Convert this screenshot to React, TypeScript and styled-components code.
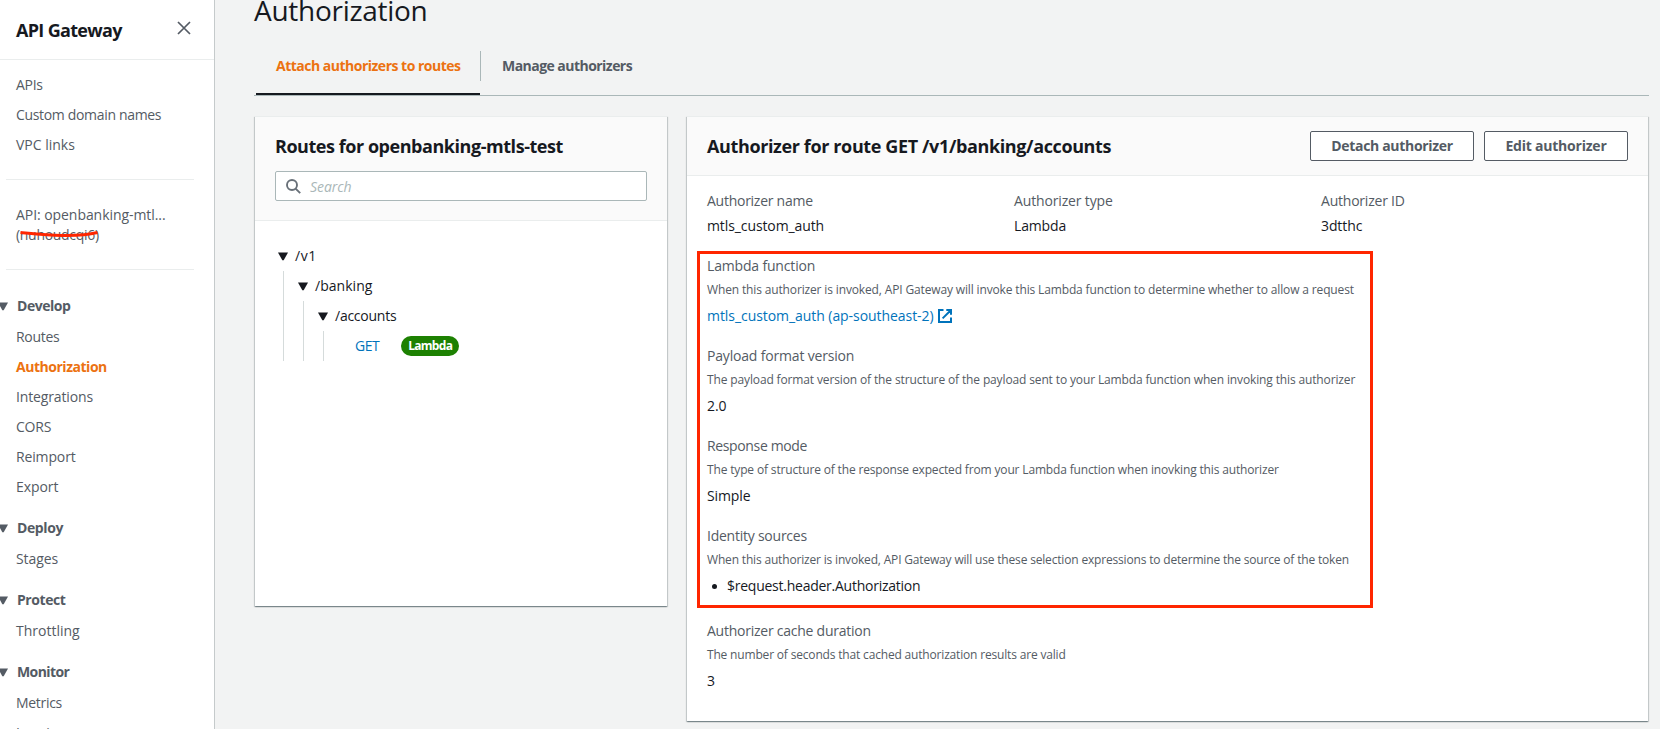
import React from 'react';
import styled, { createGlobalStyle } from 'styled-components';

const color = {
  ink: '#16191f',
  muted: '#545b64',
  label: '#545b64',
  orange: '#ec7211',
  link: '#0073bb',
  line: '#eaeded',
  control: '#aab7b8',
  mark: '#ff2600',
};

const GlobalStyle = createGlobalStyle`
  * { box-sizing: border-box; }
  html, body { margin: 0; height: 729px; overflow: hidden; }
  body {
    background: #f2f3f3;
    color: ${color.ink};
    font: 400 14px/20px 'Open Sans', 'Noto Sans', sans-serif;
  }
  h1, h2, h3, p, ul { margin: 0; padding: 0; }
`;

const Page = styled.div`
  display: flex;
  height: 729px;
  overflow: hidden;
`;

/* Letter tracking is tuned per string, in pixels */
const Text = styled.span<{ $t?: number }>`
  letter-spacing: ${p => p.$t ?? 0}px;
  white-space: nowrap;
`;

const Sidebar = styled.aside`
  flex: none;
  width: 215px;
  height: 729px;
  overflow: hidden;
  background: #fff;
  border-right: 1px solid #c5cacb;
`;

const SidebarHeader = styled.div`
  display: flex;
  justify-content: space-between;
  align-items: flex-start;
  height: 60px;
  padding: 19px 23px 0 16px;
  border-bottom: 1px solid ${color.line};
  h2 { font-size: 18px; line-height: 22px; font-weight: 700; }
  svg { margin-top: 2px; }
`;

const NavList = styled.ul<{ $top?: number }>`
  list-style: none;
  padding: ${p => p.$top ?? 0}px 0 0 16px;
`;

const NavItem = styled.li<{ $active?: boolean }>`
  height: 30px;
  line-height: 30px;
  color: ${p => (p.$active ? color.orange : color.muted)};
  font-weight: ${p => (p.$active ? 700 : 400)};
`;

const Divider = styled.hr<{ $top?: number }>`
  width: 188px;
  margin: ${p => p.$top ?? 0}px 0 0 6px;
  border: 0;
  border-top: 1px solid ${color.line};
`;

const ApiName = styled.div`
  padding: 25px 0 24px 16px;
  color: ${color.muted};
  p { height: 20px; }
`;

const ApiId = styled.p`
  position: relative;
  svg { position: absolute; left: 3px; top: 5px; }
`;

const NavGroup = styled.section`
  margin-bottom: 10px;
`;

const GroupHead = styled.h3`
  display: flex;
  align-items: center;
  height: 32px;
  font-size: 14px;
  font-weight: 700;
  color: ${color.muted};
  svg { margin: 0 9px 0 -2px; }
`;

const Groups = styled.div`
  padding-top: 20px;
`;

const Main = styled.main`
  flex: 1;
  min-width: 0;
  padding: 0 11px 0 39px;
`;

const Title = styled.h1`
  height: 48px;
  margin-top: -8px;
  font-size: 28px;
  line-height: 36px;
  font-weight: 400;
`;

const Tabs = styled.div`
  display: flex;
  height: 56px;
  padding-left: 2px;
  border-bottom: 1px solid ${color.control};
`;

const Tab = styled.div<{ $active?: boolean }>`
  width: ${p => (p.$active ? 224 : 170)}px;
  height: 55px;
  padding: 16px 0 0 20px;
  font-weight: 700;
  color: ${p => (p.$active ? color.orange : color.muted)};
  border-bottom: 2px solid ${p => (p.$active ? color.ink : 'transparent')};
`;

const TabSeparator = styled.i`
  width: 1px;
  height: 30px;
  margin: 11px 1px 0 0;
  background: ${color.control};
`;

const Columns = styled.div`
  display: grid;
  grid-template-columns: 412px 961px;
  column-gap: 20px;
  align-items: start;
  padding: 20px 0 0 1px;
`;

const Panel = styled.section<{ $height: number }>`
  height: ${p => p.$height}px;
  background: #fff;
  border-top: 1px solid ${color.line};
  box-shadow: 0 1px 1px 0 rgba(0, 28, 36, 0.3), 1px 1px 1px 0 rgba(0, 28, 36, 0.15),
    -1px 1px 1px 0 rgba(0, 28, 36, 0.15);
`;

const PanelTitle = styled.h2`
  font-size: 18px;
  line-height: 22px;
  font-weight: 700;
`;

const RoutesHeader = styled.header`
  height: 104px;
  padding: 18px 20px 0 20px;
  background: #fafafa;
  border-bottom: 1px solid ${color.line};
`;

const SearchBox = styled.div`
  display: flex;
  align-items: center;
  height: 30px;
  margin-top: 14px;
  padding-left: 10px;
  background: #fff;
  border: 1px solid ${color.control};
  border-radius: 2px;
  font-style: italic;
  color: ${color.control};
  svg { margin-right: 9px; }
  span { padding-top: 1px; }
`;

const Tree = styled.div`
  padding: 20px 0 0 23px;
`;

const TreeNode = styled.div`
  display: flex;
  align-items: center;
  height: 30px;
  svg { margin-right: 7px; }
`;

const Branch = styled.div`
  margin-left: 5px;
  padding-left: 14px;
  border-left: 1px solid #d5dbdb;
`;

const RouteMethod = styled.div`
  display: flex;
  align-items: center;
  height: 30px;
  padding-left: 17px;
  color: ${color.link};
`;

const Badge = styled.span`
  width: 58px;
  height: 20px;
  margin-left: 22px;
  border-radius: 10px;
  background: #1d8102;
  color: #fff;
  font-size: 12px;
  line-height: 20px;
  font-weight: 700;
  text-align: center;
`;

const DetailHeader = styled.header`
  display: flex;
  align-items: center;
  gap: 10px;
  height: 59px;
  padding: 0 20px;
  background: #fafafa;
  border-bottom: 1px solid ${color.line};
  h2 { flex: 1; padding-bottom: 1px; }
`;

const Button = styled.button<{ $width: number }>`
  width: ${p => p.$width}px;
  height: 30px;
  padding: 0;
  background: #fff;
  border: 1px solid ${color.muted};
  border-radius: 2px;
  color: ${color.muted};
  font: 700 14px/20px 'Open Sans', 'Noto Sans', sans-serif;
`;

const DetailBody = styled.div`
  padding: 15px 20px 0;
`;

const Summary = styled.div`
  display: grid;
  grid-template-columns: repeat(3, 307px);
  margin-bottom: 20px;
`;

const Label = styled.div`
  height: 20px;
  color: ${color.label};
`;

const Hint = styled.div`
  height: 17px;
  margin-top: 5px;
  font-size: 12px;
  line-height: 17px;
  color: ${color.label};
`;

const Value = styled.div<{ $gap?: number }>`
  display: flex;
  align-items: center;
  height: 20px;
  margin-top: ${p => p.$gap ?? 8}px;
`;

const Field = styled.div`
  height: 70px;
  margin-bottom: 20px;
`;

const LinkValue = styled(Value)`
  color: ${color.link};
  svg { margin-left: 4px; }
`;

const Bullet = styled.i`
  width: 5px;
  height: 5px;
  margin: 1px 10px 0 5px;
  border-radius: 50%;
  background: ${color.ink};
`;

const Highlighted = styled.div`
  position: relative;
  margin-bottom: 25px;
`;

const HighlightFrame = styled.div`
  position: absolute;
  left: -10px;
  top: -5px;
  width: 676px;
  height: 357px;
  border: 3px solid ${color.mark};
`;

const Caret = ({ fill }: { fill: string }) => (
  <svg width="10" height="9" viewBox="0 0 10 9">
    <path d="M0 0.5h10L5.8 8.1q-.8.8-1.6 0z" fill={fill} />
  </svg>
);

const CloseIcon = () => (
  <svg width="14" height="14" viewBox="0 0 14 14">
    <path d="M1 1l12 12M13 1L1 13" stroke={color.muted} strokeWidth="1.7" fill="none" />
  </svg>
);

const SearchIcon = () => (
  <svg width="15" height="15" viewBox="0 0 15 15">
    <circle cx="6" cy="6" r="5" stroke="#687078" strokeWidth="1.9" fill="none" />
    <path d="M9.6 9.6l4.6 4.6" stroke="#687078" strokeWidth="1.9" />
  </svg>
);

const ExternalIcon = () => (
  <svg width="14" height="14" viewBox="0 0 14 14" fill="none" stroke={color.link} strokeWidth="2">
    <path d="M5.5 1H1v12h12V8.5M8.3 1H13v4.8M12.8 1.2L4.6 9.4" />
  </svg>
);

type Item = { name: string; t: number; active?: boolean };
const groups: { title: string; t: number; items: Item[] }[] = [
  {
    title: 'Develop', t: -0.47,
    items: [
      { name: 'Routes', t: -0.3 },
      { name: 'Authorization', t: -0.47, active: true },
      { name: 'Integrations', t: -0.135 },
      { name: 'CORS', t: -0.22 },
      { name: 'Reimport', t: -0.14 },
      { name: 'Export', t: -0.06 },
    ],
  },
  { title: 'Deploy', t: -0.39, items: [{ name: 'Stages', t: -0.08 }] },
  { title: 'Protect', t: -0.44, items: [{ name: 'Throttling', t: 0 }] },
  { title: 'Monitor', t: -0.6, items: [{ name: 'Metrics', t: -0.3 }, { name: 'Logging', t: -0.2 }] },
];

const fields: { label: string; lt: number; hint: string; ht: number; value: React.ReactNode }[] = [
  {
    label: 'Lambda function', lt: -0.17,
    hint: 'When this authorizer is invoked, API Gateway will invoke this Lambda function to determine whether to allow a request', ht: -0.143,
    value: <LinkValue><Text $t={-0.06}>mtls_custom_auth (ap-southeast-2)</Text><ExternalIcon /></LinkValue>,
  },
  {
    label: 'Payload format version', lt: -0.18,
    hint: 'The payload format version of the structure of the payload sent to your Lambda function when invoking this authorizer', ht: -0.135,
    value: <Value><Text $t={-0.1}>2.0</Text></Value>,
  },
  {
    label: 'Response mode', lt: -0.36,
    hint: 'The type of structure of the response expected from your Lambda function when inovking this authorizer', ht: -0.155,
    value: <Value><Text $t={-0.1}>Simple</Text></Value>,
  },
  {
    label: 'Identity sources', lt: -0.24,
    hint: 'When this authorizer is invoked, API Gateway will use these selection expressions to determine the source of the token', ht: -0.174,
    value: <Value><Bullet /><Text $t={-0.25}>$request.header.Authorization</Text></Value>,
  },
];

export default function App() {
  return (
    <Page>
      <GlobalStyle />
      <Sidebar>
        <SidebarHeader>
          <h2><Text $t={-0.68}>API Gateway</Text></h2>
          <CloseIcon />
        </SidebarHeader>
        <NavList $top={10}>
          <NavItem><Text $t={-0.3}>APIs</Text></NavItem>
          <NavItem><Text $t={-0.33}>Custom domain names</Text></NavItem>
          <NavItem><Text $t={-0.01}>VPC links</Text></NavItem>
        </NavList>
        <Divider $top={19} />
        <ApiName>
          <p><Text $t={-0.06}>API: openbanking-mtl...</Text></p>
          <ApiId>
            <Text $t={-0.3}>(nuhoudcqi6)</Text>
            <svg width="80" height="10" viewBox="0 0 80 10">
              <path d="M1.500 2.500C24 4.500 56 8 78.500 2.500" stroke={color.mark} strokeWidth="3" fill="none" />
            </svg>
          </ApiId>
        </ApiName>
        <Divider />
        <Groups>
          {groups.map(g => (
            <NavGroup key={g.title}>
              <GroupHead><Caret fill={color.muted} /><Text $t={g.t}>{g.title}</Text></GroupHead>
              <NavList>
                {g.items.map(i => (
                  <NavItem key={i.name} $active={i.active}><Text $t={i.t}>{i.name}</Text></NavItem>
                ))}
              </NavList>
            </NavGroup>
          ))}
        </Groups>
      </Sidebar>
      <Main>
        <Title><Text $t={-0.28}>Authorization</Text></Title>
        <Tabs>
          <Tab $active><Text $t={-0.5}>Attach authorizers to routes</Text></Tab>
          <TabSeparator />
          <Tab><Text $t={-0.537}>Manage authorizers</Text></Tab>
        </Tabs>
        <Columns>
          <Panel $height={490}>
            <RoutesHeader>
              <PanelTitle><Text $t={-0.453}>Routes for openbanking-mtls-test</Text></PanelTitle>
              <SearchBox><SearchIcon /><Text $t={-0.05}>Search</Text></SearchBox>
            </RoutesHeader>
            <Tree>
              <TreeNode><Caret fill={color.ink} /><Text $t={0.6}>/v1</Text></TreeNode>
              <Branch>
                <TreeNode><Caret fill={color.ink} /><Text $t={0.04}>/banking</Text></TreeNode>
                <Branch>
                  <TreeNode><Caret fill={color.ink} /><Text $t={-0.25}>/accounts</Text></TreeNode>
                  <Branch>
                    <RouteMethod><Text $t={-0.5}>GET</Text><Badge><Text $t={-0.7}>Lambda</Text></Badge></RouteMethod>
                  </Branch>
                </Branch>
              </Branch>
            </Tree>
          </Panel>
          <Panel $height={605}>
            <DetailHeader>
              <PanelTitle><Text $t={-0.375}>Authorizer for route GET /v1/banking/accounts</Text></PanelTitle>
              <Button $width={164}><Text $t={-0.315}>Detach authorizer</Text></Button>
              <Button $width={144}><Text $t={-0.216}>Edit authorizer</Text></Button>
            </DetailHeader>
            <DetailBody>
              <Summary>
                <div>
                  <Label><Text $t={-0.26}>Authorizer name</Text></Label>
                  <Value $gap={5}><Text $t={-0.1}>mtls_custom_auth</Text></Value>
                </div>
                <div>
                  <Label><Text $t={-0.15}>Authorizer type</Text></Label>
                  <Value $gap={5}><Text $t={-0.16}>Lambda</Text></Value>
                </div>
                <div>
                  <Label><Text $t={-0.22}>Authorizer ID</Text></Label>
                  <Value $gap={5}><Text $t={-0.1}>3dtthc</Text></Value>
                </div>
              </Summary>
              <Highlighted>
                {fields.map(f => (
                  <Field key={f.label}>
                    <Label><Text $t={f.lt}>{f.label}</Text></Label>
                    <Hint><Text $t={f.ht}>{f.hint}</Text></Hint>
                    {f.value}
                  </Field>
                ))}
                <HighlightFrame />
              </Highlighted>
              <Field>
                <Label><Text $t={-0.244}>Authorizer cache duration</Text></Label>
                <Hint><Text $t={-0.175}>The number of seconds that cached authorization results are valid</Text></Hint>
                <Value><Text>3</Text></Value>
              </Field>
            </DetailBody>
          </Panel>
        </Columns>
      </Main>
    </Page>
  );
}
